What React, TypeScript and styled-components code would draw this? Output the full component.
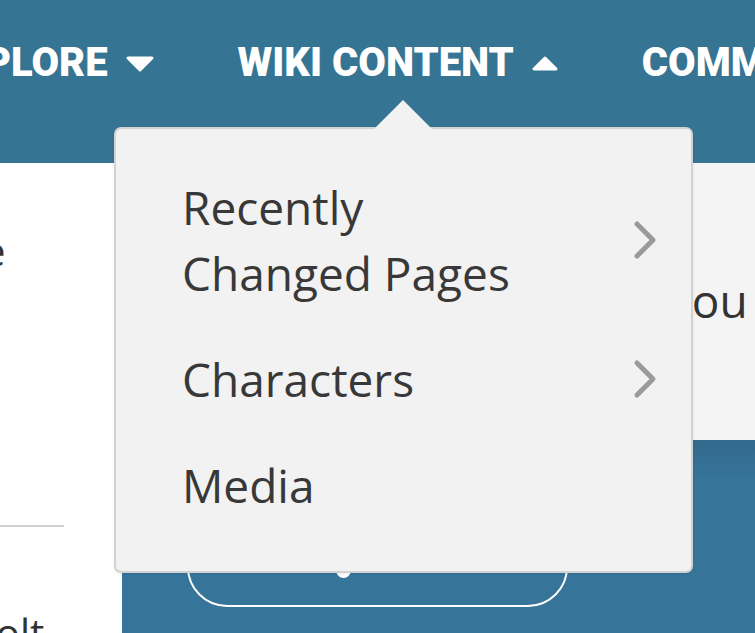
import React from "react";
import styled, { createGlobalStyle } from "styled-components";

const Global = createGlobalStyle`
  html, body { margin: 0; padding: 0; }
  body { width: 755px; height: 633px; overflow: hidden; background: #ffffff; }
  * { box-sizing: border-box; }
`;

const BLUE = "#36749a";

const Page = styled.div`
  position: relative;
  width: 755px;
  height: 633px;
  overflow: hidden;
  display: flex;
  flex-direction: column;
`;

const Header = styled.header`
  height: 163px;
  flex: none;
  background: #367493;
  padding-top: 39px;
  overflow: hidden;
`;

const Nav = styled.nav`
  display: flex;
  align-items: flex-start;
  gap: 84px;
  white-space: nowrap;
`;

const NavItem = styled.div<{ $offset?: number }>`
  display: flex;
  align-items: center;
  gap: 18px;
  flex: none;
  margin-left: ${(p) => p.$offset ?? 0}px;
  font-family: Roboto, "Liberation Sans", sans-serif;
  font-weight: 900;
  font-size: 40px;
  line-height: 47px;
  color: #ffffff;
`;

const Caret = styled.svg`
  flex: none;
  display: block;
  margin-top: 2px;
`;

const Body = styled.div`
  flex: 1;
  display: grid;
  grid-template-columns: 122px 1fr;
`;

const Side = styled.aside`
  background: #ffffff;
  font-family: "Open Sans", "Liberation Sans", sans-serif;
  font-size: 40px;
  color: #333333;
  overflow: hidden;
`;

const SideText = styled.p<{ $top: number; $shift: number }>`
  margin: ${(p) => p.$top}px 0 0 ${(p) => p.$shift}px;
  line-height: 54px;
  white-space: nowrap;
`;

const Divider = styled.hr`
  margin: 0;
  margin-top: 247px;
  width: 64px;
  height: 2px;
  border: 0;
  background: #cfcfcf;
`;

const Main = styled.main`
  display: flex;
  flex-direction: column;
`;

const Panel = styled.section`
  height: 277px;
  flex: none;
  background: #f4f4f4;
  padding: 107px 0 0 544px;
  font-family: "Open Sans", "Liberation Sans", sans-serif;
  font-size: 46px;
  line-height: 60px;
  color: #333333;
  white-space: nowrap;
`;

const Promo = styled.section`
  flex: 1;
  background: linear-gradient(#33698c, ${BLUE} 40px);
  padding: 87px 0 0 65px;
`;

const OutlineButton = styled.div`
  width: 381px;
  height: 80px;
  border: 2px solid #ffffff;
  border-radius: 40px;
  display: flex;
  align-items: flex-end;
  padding-left: 147px;
  padding-bottom: 27px;
`;

const Dot = styled.span`
  width: 15px;
  height: 15px;
  border-radius: 50%;
  background: #ffffff;
`;

const Dropdown = styled.div`
  position: absolute;
  left: 114px;
  top: 127px;
  width: 579px;
  background: #f2f2f2;
  border: 2px solid #d2d2d2;
  border-radius: 7px;
  padding: 25px 34px 33px 66px;
  box-shadow: 0 1px 3px rgba(0, 0, 0, 0.08);
  font-family: "Open Sans", "Liberation Sans", sans-serif;
  font-size: 46px;
  line-height: 66px;
  color: #383838;
`;

const Notch = styled.span`
  position: absolute;
  top: -29px;
  left: 258px;
  width: 0;
  height: 0;
  border-left: 29px solid transparent;
  border-right: 29px solid transparent;
  border-bottom: 29px solid #f2f2f2;
`;

const MenuItem = styled.div`
  display: flex;
  align-items: center;
  justify-content: space-between;
  padding: 20px 0;
`;

const Chevron = styled.svg`
  flex: none;
  display: block;
`;

const ChevronIcon = () => (
  <Chevron width="24" height="40" viewBox="0 0 24 40">
    <polyline
      points="4,4 20,20 4,36"
      fill="none"
      stroke="#9a9a9a"
      strokeWidth="5"
      strokeLinecap="round"
      strokeLinejoin="round"
    />
  </Chevron>
);

const DownCaret = () => (
  <Caret width="28" height="16" viewBox="0 0 28 16">
    <path d="M2 2 L26 2 L14 14 Z" fill="#fff" stroke="#fff" strokeWidth="3" strokeLinejoin="round" />
  </Caret>
);

const UpCaret = () => (
  <Caret width="26" height="15" viewBox="0 0 26 15">
    <path d="M2 13 L24 13 L13 2 Z" fill="#fff" stroke="#fff" strokeWidth="3" strokeLinejoin="round" />
  </Caret>
);

const items = [
  { label: ["Recently", "Changed Pages"], sub: true },
  { label: ["Characters"], sub: true },
  { label: ["Media"], sub: false },
];

export default function App() {
  return (
    <>
      <Global />
      <Page>
        <Header>
          <Nav>
            <NavItem $offset={-63}>
              EXPLORE
              <DownCaret />
            </NavItem>
            <NavItem>
              WIKI CONTENT
              <UpCaret />
            </NavItem>
            <NavItem>COMMUNITY</NavItem>
          </Nav>
        </Header>
        <Body>
          <Side>
            <SideText $top={61} $shift={-17}>e</SideText>
            <Divider />
            <SideText $top={79} $shift={-30}>Bolt</SideText>
          </Side>
          <Main>
            <Panel>You</Panel>
            <Promo>
              <OutlineButton>
                <Dot />
              </OutlineButton>
            </Promo>
          </Main>
        </Body>
        <Dropdown>
          <Notch />
          {items.map((it) => (
            <MenuItem key={it.label.join(" ")}>
              <div>
                {it.label.map((l) => (
                  <div key={l}>{l}</div>
                ))}
              </div>
              {it.sub && <ChevronIcon />}
            </MenuItem>
          ))}
        </Dropdown>
      </Page>
    </>
  );
}
